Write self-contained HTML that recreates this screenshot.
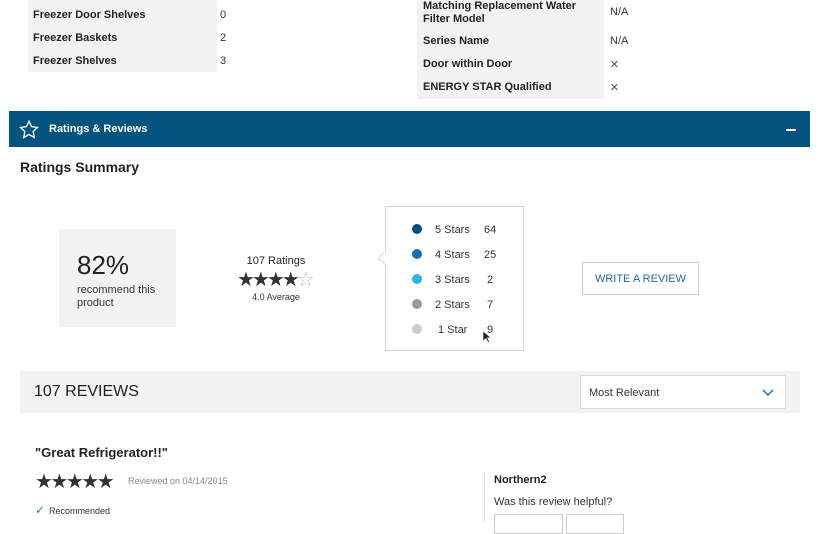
<!DOCTYPE html>
<html><head><style>
*{margin:0;padding:0;box-sizing:border-box}
body{width:828px;height:522px;overflow:hidden;background:#fff;font-family:"Liberation Sans",Arial,sans-serif;color:#222;position:relative}
.a{position:absolute;white-space:nowrap}
.b{font-weight:bold;font-size:11px}
.v{font-size:11px;color:#333}
</style></head><body>
<div class="a" style="left:28px;top:0;width:189px;height:72px;background:#f2f2f2"></div>
<div class="a b" style="left:33px;top:9px">Freezer Door Shelves</div><div class="a v" style="left:220px;top:9px">0</div>
<div class="a b" style="left:33px;top:32px">Freezer Baskets</div><div class="a v" style="left:220px;top:32px">2</div>
<div class="a b" style="left:33px;top:55px">Freezer Shelves</div><div class="a v" style="left:220px;top:55px">3</div>

<div class="a" style="left:417px;top:0;width:187px;height:99px;background:#f2f2f2"></div>
<div class="a b" style="left:423px;top:0px;line-height:13px">Matching Replacement Water<br>Filter Model</div><div class="a v" style="left:610px;top:6px">N/A</div>
<div class="a b" style="left:423px;top:35px">Series Name</div><div class="a v" style="left:610px;top:35px">N/A</div>
<div class="a b" style="left:423px;top:58px">Door within Door</div><div class="a v" style="left:610px;top:56px;font-size:15px;color:#555">×</div>
<div class="a b" style="left:423px;top:81px">ENERGY STAR Qualified</div><div class="a v" style="left:610px;top:79px;font-size:15px;color:#555">×</div>

<div class="a" style="left:9px;top:111px;width:801px;height:36px;background:#05537f"></div>
<svg class="a" style="left:19px;top:120px" width="20" height="19" viewBox="0 0 24 23"><path d="M12 1.5l3.1 6.6 7.2.9-5.3 5 1.4 7.1L12 17.6l-6.4 3.5L7 14l-5.3-5 7.2-.9z" fill="none" stroke="#fff" stroke-width="1.6"/></svg>
<div class="a b" style="left:49px;top:123px;color:#fff">Ratings &amp; Reviews</div>
<div class="a" style="left:786px;top:129px;width:10px;height:2px;background:#fff"></div>

<div class="a" style="left:20px;top:159px;font-size:14px;font-weight:bold">Ratings Summary</div>

<div class="a" style="left:59px;top:229px;width:117px;height:98px;background:#f2f2f2"></div>
<div class="a" style="left:77px;top:250px;font-size:26px;color:#222">82%</div>
<div class="a" style="left:77px;top:284px;font-size:11px;line-height:13px;color:#333">recommend this<br>product</div>

<div class="a" style="left:236px;top:255px;width:80px;text-align:center;font-size:11px">107 Ratings</div>
<div class="a" style="left:237px;top:267px;font-size:20px;letter-spacing:-3px;color:#333">★★★★<span style="color:#bbb">☆</span></div>
<div class="a" style="left:236px;top:292px;width:80px;text-align:center;font-size:9px;color:#333">4.0 Average</div>

<div class="a" style="left:385px;top:206px;width:139px;height:145px;border:1px solid #d5d5d5;background:#fff"></div>
<div class="a" style="left:380px;top:253px;width:10px;height:10px;background:#fff;border-left:1px solid #d5d5d5;border-bottom:1px solid #d5d5d5;transform:rotate(45deg)"></div>
<div class="a" style="left:412px;top:224px;width:10px;height:10px;border-radius:50%;background:#0a4a8c"></div><div class="a v" style="left:435px;top:224px">5 Stars</div><div class="a v" style="left:484px;top:224px">64</div>
<div class="a" style="left:412px;top:249px;width:10px;height:10px;border-radius:50%;background:#1a6fb5"></div><div class="a v" style="left:435px;top:249px">4 Stars</div><div class="a v" style="left:484px;top:249px">25</div>
<div class="a" style="left:412px;top:274px;width:10px;height:10px;border-radius:50%;background:#2eb3e6"></div><div class="a v" style="left:435px;top:274px">3 Stars</div><div class="a v" style="left:487px;top:274px">2</div>
<div class="a" style="left:412px;top:299px;width:10px;height:10px;border-radius:50%;background:#999"></div><div class="a v" style="left:435px;top:299px">2 Stars</div><div class="a v" style="left:487px;top:299px">7</div>
<div class="a" style="left:412px;top:324px;width:10px;height:10px;border-radius:50%;background:#ccc"></div><div class="a v" style="left:438px;top:324px">1 Star</div><div class="a v" style="left:487px;top:324px">9</div>

<div class="a" style="left:582px;top:262px;width:117px;height:33px;border:1px solid #ccc;color:#1a6aa8;font-size:11px;text-align:center;line-height:32px">WRITE A REVIEW</div>

<div class="a" style="left:20px;top:371px;width:780px;height:42px;background:#f2f2f2"></div>
<div class="a" style="left:34px;top:383px;font-size:16px;color:#222">107 REVIEWS</div>
<div class="a" style="left:580px;top:375px;width:206px;height:34px;background:#fff;border:1px solid #ddd"></div>
<div class="a v" style="left:589px;top:387px">Most Relevant</div>
<svg class="a" style="left:762px;top:389px" width="12" height="8"><path d="M1 1l5 5 5-5" fill="none" stroke="#1a6aa8" stroke-width="1.4"/></svg>

<div class="a" style="left:35px;top:445px;font-size:13px;font-weight:bold">"Great Refrigerator!!"</div>
<div class="a" style="left:35px;top:469px;font-size:20px;letter-spacing:-2.5px;color:#333">★★★★★</div>
<div class="a" style="left:128px;top:476px;font-size:9px;color:#888">Reviewed on 04/14/2015</div>
<div class="a" style="left:35px;top:503px;font-size:12px;color:#2a9a2a">✓</div>
<div class="a" style="left:49px;top:506px;font-size:9px;color:#333">Recommended</div>
<div class="a" style="left:484px;top:472px;width:1px;height:50px;background:#ddd"></div>
<div class="a" style="left:494px;top:474px;font-size:11px;font-weight:bold">Northern2</div>
<div class="a v" style="left:494px;top:496px">Was this review helpful?</div>
<div class="a" style="left:494px;top:514px;width:69px;height:20px;border:1px solid #ccc"></div>
<div class="a" style="left:566px;top:514px;width:58px;height:20px;border:1px solid #ccc"></div>
<svg class="a" style="left:482px;top:330px" width="10" height="14"><path d="M1 1v10l3-2.5 2 4 1.5-.7-2-4h3.5z" fill="#222" stroke="#fff" stroke-width=".6"/></svg>
</body></html>
